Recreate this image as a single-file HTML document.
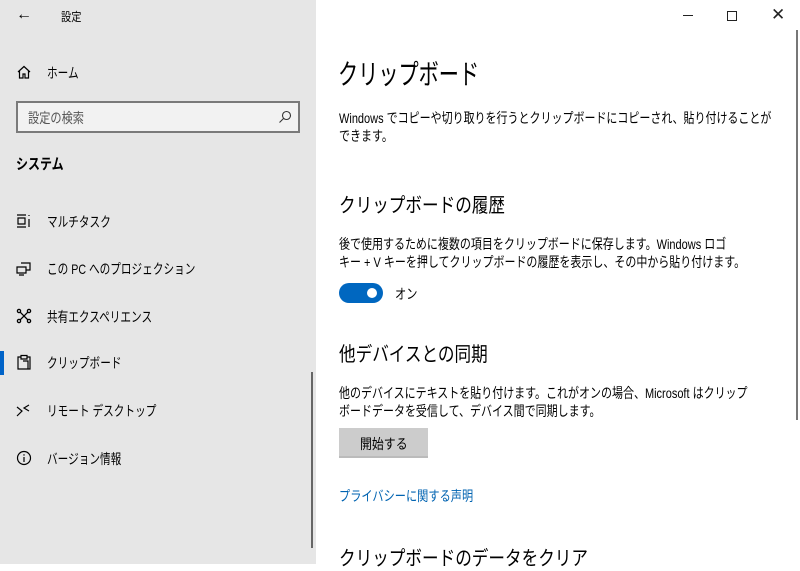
<!DOCTYPE html>
<html><head><meta charset="utf-8"><style>
*{margin:0;padding:0;box-sizing:border-box}
body{width:800px;height:564px;overflow:hidden;font-family:"Liberation Sans","Noto Sans CJK JP",sans-serif;color:#000;background:#fff;position:relative}
.side{position:absolute;left:0;top:0;width:316px;height:564px;background:#e6e6e6}
.a{position:absolute;white-space:nowrap;transform-origin:0 0}
.it{font-size:14px;left:47px;transform:scaleX(0.76)}
.ic{position:absolute;left:16px}
.p{font-size:14px;left:339px;line-height:18px;transform:scaleX(0.785)}
.h{font-size:20px;left:339px;transform:scaleX(0.83)}
</style></head><body>
<div class="side">
<div class="a" style="left:16px;top:6px;font-size:16px">&#8592;</div>
<div class="a" style="left:61px;top:8px;font-size:12px;transform:scaleX(0.85)">設定</div>
<svg class="ic" style="top:64px" width="16" height="16" viewBox="0 0 16 16" fill="none" stroke="#000" stroke-width="1.2"><path d="M2 8L8 2.5 14 8M3.5 6.8V14h3.5v-4h2v4h3.5V6.8"/></svg>
<div class="a it" style="top:63px">ホーム</div>
<div class="a" style="left:16px;top:101px;width:284px;height:32px;border:2px solid #7a7a7a;background:#f2f2f2"></div>
<div class="a" style="left:28px;top:108px;font-size:14px;color:#555;transform:scaleX(0.8)">設定の検索</div>
<svg class="a" style="left:278px;top:110px" width="14" height="14" viewBox="0 0 14 14" fill="none" stroke="#333" stroke-width="1.1"><circle cx="8.5" cy="5.5" r="4"/><path d="M5.5 8.5L1.5 12.5"/></svg>
<div class="a" style="left:16px;top:153px;font-size:15px;font-weight:bold;transform:scaleX(0.8)">システム</div>
<svg class="ic" style="top:213px" width="16" height="16" viewBox="0 0 16 16" fill="none" stroke="#000" stroke-width="1.2"><path d="M1 2h9M1 14h9M2 5h7v6H2zM13 2v1M13 6v8"/></svg>
<div class="a it" style="top:212px">マルチタスク</div>
<svg class="ic" style="top:260px" width="16" height="16" viewBox="0 0 16 16" fill="none" stroke="#000" stroke-width="1.2"><path d="M5 3h9v7H10M1 7h9v6H1zM3 15h5"/></svg>
<div class="a it" style="top:259px">この PC へのプロジェクション</div>
<svg class="ic" style="top:308px" width="16" height="16" viewBox="0 0 16 16" fill="none" stroke="#000" stroke-width="1.3"><circle cx="3" cy="3" r="1.6"/><circle cx="13" cy="3" r="1.6"/><circle cx="3" cy="13" r="1.6"/><circle cx="13" cy="13" r="1.6"/><path d="M4.2 4.2l7.6 7.6M11.8 4.2l-7.6 7.6"/></svg>
<div class="a it" style="top:307px">共有エクスペリエンス</div>
<div class="a" style="left:0;top:351px;width:4px;height:24px;background:#0063c8"></div>
<svg class="ic" style="top:354px" width="16" height="16" viewBox="0 0 16 16" fill="none" stroke="#000" stroke-width="1.2"><path d="M5 3H2v12h12V3h-3M5 1.5h6V5H5zM7 7h5v8"/></svg>
<div class="a it" style="top:353px">クリップボード</div>
<svg class="ic" style="top:402px" width="16" height="16" viewBox="0 0 16 16" fill="none" stroke="#000" stroke-width="1.2"><path d="M1 5l5 4-5 5M13 3l-5 3 5 3"/></svg>
<div class="a it" style="top:401px">リモート デスクトップ</div>
<svg class="ic" style="top:450px" width="16" height="16" viewBox="0 0 16 16" fill="none" stroke="#000" stroke-width="1.2"><circle cx="8" cy="8" r="6.5"/><path d="M8 7v5M8 4.3v1.3"/></svg>
<div class="a it" style="top:449px">バージョン情報</div>
<div class="a" style="left:311px;top:372px;width:2px;height:176px;background:#666"></div>
</div>
<div class="a" style="left:683px;top:15px;width:10px;height:1px;background:#222"></div>
<div class="a" style="left:727px;top:11px;width:10px;height:10px;border:1px solid #222"></div>
<div class="a" style="left:771px;top:5px;font-size:17px;color:#222">&#10005;</div>
<div class="a" style="left:796px;top:30px;width:2px;height:390px;background:#777"></div>
<div class="a" style="left:338px;top:53px;font-size:28px;transform:scaleX(0.72)">クリップボード</div>
<div class="a p" style="top:109px">Windows でコピーや切り取りを行うとクリップボードにコピーされ、貼り付けることが<br>できます。</div>
<div class="a h" style="top:189px">クリップボードの履歴</div>
<div class="a p" style="top:235px">後で使用するために複数の項目をクリップボードに保存します。Windows ロゴ<br>キー + V キーを押してクリップボードの履歴を表示し、その中から貼り付けます。</div>
<div class="a" style="left:339px;top:283px;width:44px;height:20px;border-radius:10px;background:#0067c0"></div>
<div class="a" style="left:367px;top:288px;width:10px;height:10px;border-radius:5px;background:#fff"></div>
<div class="a" style="left:395px;top:284px;font-size:14px;transform:scaleX(0.8)">オン</div>
<div class="a h" style="top:338px">他デバイスとの同期</div>
<div class="a p" style="top:384px">他のデバイスにテキストを貼り付けます。これがオンの場合、Microsoft はクリップ<br>ボードデータを受信して、デバイス間で同期します。</div>
<div class="a" style="left:339px;top:428px;width:89px;height:30px;background:#ccc;border-bottom:2px solid #bbb"></div>
<div class="a" style="left:360px;top:434px;font-size:14px;transform:scaleX(0.85)">開始する</div>
<div class="a" style="left:339px;top:486px;font-size:14px;color:#0063b1;transform:scaleX(0.8)">プライバシーに関する声明</div>
<div class="a h" style="top:542px">クリップボードのデータをクリア</div>
</body></html>
